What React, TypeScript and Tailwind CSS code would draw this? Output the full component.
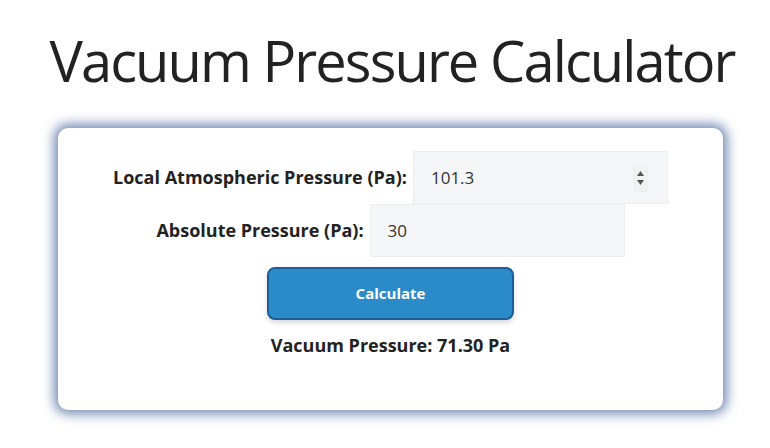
export default function App() {
  return (
    <div className="min-h-[448px] w-[770px] bg-white font-['Open_Sans','Noto_Sans',sans-serif] text-[#222]">
      <h1 className="pl-[14px] pt-[27px] text-center text-[56px] font-normal leading-[66px] tracking-[-1.9px] text-[#222]">
        Vacuum Pressure Calculator
      </h1>

      <div className="ml-[58px] mt-[35px] h-[282px] w-[665px] rounded-[10px] bg-white px-[22px] pt-[23px] shadow-[0_0_12px_4px_rgba(80,110,160,0.8)]">
        <div className="flex items-center justify-center gap-[6px]">
          <label className="text-[18px] font-bold">Local Atmospheric Pressure (Pa):</label>
          <div className="relative">
            <input
              type="text"
              defaultValue="101.3"
              className="h-[53px] w-[255px] border border-[#eceef1] bg-[#f5f6f8] px-[17px] text-[17px] text-[#333] outline-none"
            />
            <div className="absolute right-[20px] top-[13px] flex h-[28px] w-[15px] flex-col items-center justify-center gap-[4px] bg-[#f0f1f3]">
              <svg width="7" height="5" viewBox="0 0 7 5">
                <path d="M3.5 0L7 5H0z" fill="#555" />
              </svg>
              <svg width="7" height="5" viewBox="0 0 7 5">
                <path d="M0 0h7L3.5 5z" fill="#555" />
              </svg>
            </div>
          </div>
        </div>

        <div className="flex items-center justify-center gap-[6px]">
          <label className="text-[18px] font-bold">Absolute Pressure (Pa):</label>
          <input
            type="text"
            defaultValue="30"
            className="h-[53px] w-[255px] border border-[#eceef1] bg-[#f5f6f8] px-[17px] text-[17px] text-[#333] outline-none"
          />
        </div>

        <div className="mt-[10px] flex justify-center">
          <button className="h-[53px] w-[247px] rounded-[8px] border-2 border-[#1b5f98] bg-[#2b8bc8] text-[15px] font-bold text-white shadow-[0_3px_5px_rgba(0,0,0,0.15)]">
            Calculate
          </button>
        </div>

        <p className="mt-[12px] text-center text-[18px] font-bold">Vacuum Pressure: 71.30 Pa</p>
      </div>
    </div>
  );
}
